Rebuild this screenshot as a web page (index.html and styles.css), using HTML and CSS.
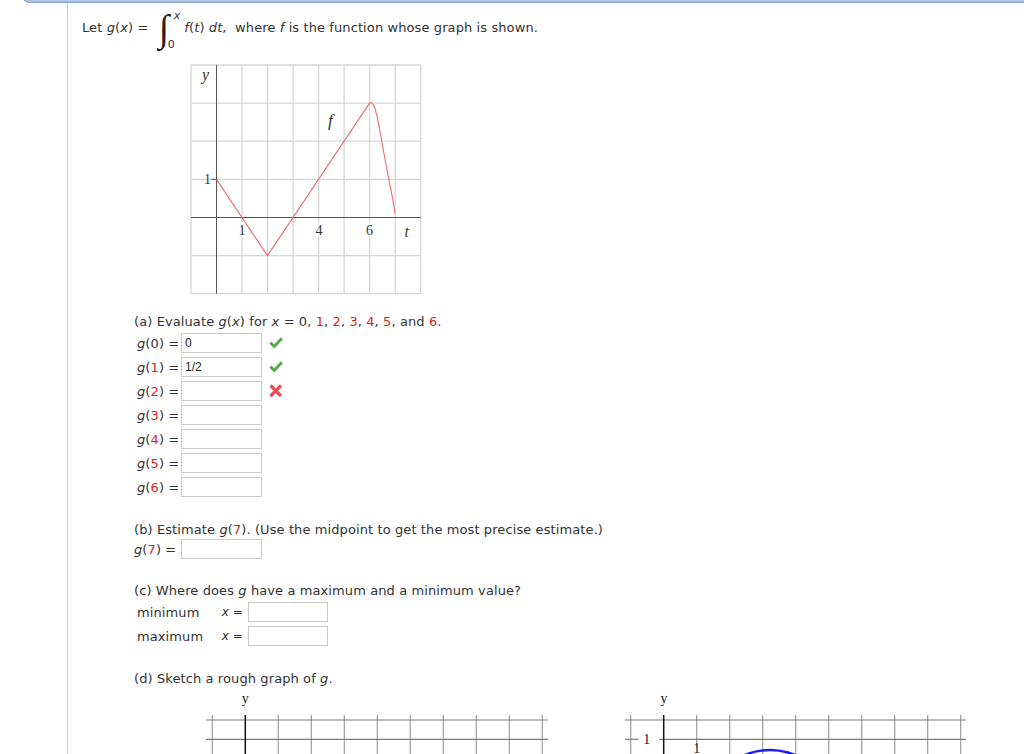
FILE: index.html
```html
<!DOCTYPE html>
<html>
<head>
<meta charset="utf-8">
<link rel="stylesheet" href="styles.css">
</head>
<body>
<div class="topbar"><div class="topbar-inner"></div></div>
<div class="page">
  <div class="content">
    <div class="intro">
      <span class="word">Let <i>g</i>(<i>x</i>) =</span>
      <span class="integral">
        <span class="int-sign">∫</span>
        <span class="limits"><i class="up">x</i><span class="low">0</span></span>
      </span>
      <span class="word"><i>f</i>(<i>t</i>) <i>dt</i>, &nbsp;where <i>f</i> is the function whose graph is shown.</span>
    </div>

    <svg class="graph-f" width="232" height="231" viewBox="0 0 232 231">
      <g class="grid">
        <line x1="1" y1="1" x2="1" y2="229.7"/>
        <line x1="52" y1="1" x2="52" y2="229.7"/>
        <line x1="77.6" y1="1" x2="77.6" y2="229.7"/>
        <line x1="103.1" y1="1" x2="103.1" y2="229.7"/>
        <line x1="128.6" y1="1" x2="128.6" y2="229.7"/>
        <line x1="154.1" y1="1" x2="154.1" y2="229.7"/>
        <line x1="179.6" y1="1" x2="179.6" y2="229.7"/>
        <line x1="205.2" y1="1" x2="205.2" y2="229.7"/>
        <line x1="230.7" y1="1" x2="230.7" y2="229.7"/>
        <line x1="1" y1="1" x2="230.7" y2="1"/>
        <line x1="1" y1="39.1" x2="230.7" y2="39.1"/>
        <line x1="1" y1="77.2" x2="230.7" y2="77.2"/>
        <line x1="1" y1="115.4" x2="230.7" y2="115.4"/>
        <line x1="1" y1="191.6" x2="230.7" y2="191.6"/>
        <line x1="1" y1="229.7" x2="230.7" y2="229.7"/>
      </g>
      <g class="axes">
        <line x1="26.5" y1="1" x2="26.5" y2="229.7"/>
        <line x1="1" y1="153.5" x2="230.7" y2="153.5"/>
        <line x1="21.5" y1="115.4" x2="26.5" y2="115.4"/>
      </g>
      <rect class="knock" x="47" y="159" width="10" height="13"/>
      <rect class="knock" x="124" y="159" width="10" height="13"/>
      <rect class="knock" x="174.5" y="159" width="10" height="13"/>
      <polyline class="fline" points="26.5,115.4 77.5,191.6 179.6,39.1 180.9,38.6 182.2,39.2 184.7,43.4 187.3,53.2 189.8,66.4 192.4,81.1 194.9,94.4 198.8,115.4 202.6,134.4 205.1,149.7"/>
      <text class="lab it" x="12" y="16">y</text>
      <text class="lab" x="14" y="119.8">1</text>
      <text class="lab mid" x="52" y="170.5">1</text>
      <text class="lab mid" x="129" y="170.5">4</text>
      <text class="lab mid" x="179.5" y="170.5">6</text>
      <text class="lab it" x="214.5" y="173">t</text>
      <text class="lab it big" x="138" y="62">f</text>
    </svg>

    <div class="part part-a">
      <p class="q">(a) Evaluate <i>g</i>(<i>x</i>) for <i>x</i> = 0, <span class="red">1</span>, <span class="red">2</span>, <span class="red">3</span>, <span class="red">4</span>, <span class="red">5</span>, and <span class="red">6</span>.</p>
      <div class="rows rows-a">
        <div class="row"><span class="lbl"><i>g</i>(0) =</span><span class="box">0</span>
          <svg class="mark" width="16" height="16" viewBox="0 0 16 16"><path class="ok" d="M1.2,8.6 L3.6,6.4 L6.2,9.2 L12.9,2.2 L15,4.3 L6.3,13.4 Z"/></svg></div>
        <div class="row"><span class="lbl"><i>g</i>(<span class="red">1</span>) =</span><span class="box">1/2</span>
          <svg class="mark" width="16" height="16" viewBox="0 0 16 16"><path class="ok" d="M1.2,8.6 L3.6,6.4 L6.2,9.2 L12.9,2.2 L15,4.3 L6.3,13.4 Z"/></svg></div>
        <div class="row"><span class="lbl"><i>g</i>(<span class="red">2</span>) =</span><span class="box"></span>
          <svg class="mark" width="16" height="16" viewBox="0 0 16 16"><path class="bad" d="M2.5,2.5 L13,13 M13,2.5 L2.5,13"/></svg></div>
        <div class="row"><span class="lbl"><i>g</i>(<span class="red">3</span>) =</span><span class="box"></span></div>
        <div class="row"><span class="lbl"><i>g</i>(<span class="red">4</span>) =</span><span class="box"></span></div>
        <div class="row"><span class="lbl"><i>g</i>(<span class="red">5</span>) =</span><span class="box"></span></div>
        <div class="row"><span class="lbl"><i>g</i>(<span class="red">6</span>) =</span><span class="box"></span></div>
      </div>
    </div>

    <div class="part part-b">
      <p class="q">(b) Estimate <i>g</i>(<span class="red">7</span>). (Use the midpoint to get the most precise estimate.)</p>
      <div class="rows rows-b">
        <div class="row"><span class="lbl lbl-b"><i>g</i>(<span class="red">7</span>) =</span><span class="box"></span></div>
      </div>
    </div>

    <div class="part part-c">
      <p class="q">(c) Where does <i>g</i> have a maximum and a minimum value?</p>
      <div class="rows rows-c">
        <div class="row"><span class="lbl lbl-c">minimum</span><span class="eq"><i>x</i> =</span><span class="box"></span></div>
        <div class="row"><span class="lbl lbl-c">maximum</span><span class="eq"><i>x</i> =</span><span class="box"></span></div>
      </div>
    </div>

    <div class="part part-d">
      <p class="q">(d) Sketch a rough graph of <i>g</i>.</p>
      <div class="sketches">
        <svg class="sketch" width="352" height="90" viewBox="0 0 352 90">
          <g class="vgrid">
            <line x1="12.3" y1="25" x2="12.3" y2="90"/>
            <line x1="78.3" y1="25" x2="78.3" y2="90"/>
            <line x1="111.3" y1="25" x2="111.3" y2="90"/>
            <line x1="144.3" y1="25" x2="144.3" y2="90"/>
            <line x1="177.3" y1="25" x2="177.3" y2="90"/>
            <line x1="210.3" y1="25" x2="210.3" y2="90"/>
            <line x1="243.3" y1="25" x2="243.3" y2="90"/>
            <line x1="276.3" y1="25" x2="276.3" y2="90"/>
            <line x1="309.3" y1="25" x2="309.3" y2="90"/>
            <line x1="342.3" y1="25" x2="342.3" y2="90"/>
          </g>
          <g class="hgrid">
            <line x1="6" y1="30" x2="348" y2="30"/>
            <line x1="6" y1="49.3" x2="348" y2="49.3"/>
            <line x1="6" y1="68.6" x2="348" y2="68.6"/>
          </g>
          <line class="yaxis" x1="45.3" y1="25" x2="45.3" y2="90"/>
          <text class="slab mid" x="45.3" y="12.5">y</text>
        </svg>
        <svg class="sketch" width="352" height="90" viewBox="0 0 352 90">
          <g class="vgrid">
            <line x1="10.7" y1="25" x2="10.7" y2="90"/>
            <line x1="76.7" y1="25" x2="76.7" y2="58"/>
            <line x1="109.7" y1="25" x2="109.7" y2="90"/>
            <line x1="142.7" y1="25" x2="142.7" y2="90"/>
            <line x1="175.7" y1="25" x2="175.7" y2="90"/>
            <line x1="208.7" y1="25" x2="208.7" y2="90"/>
            <line x1="241.7" y1="25" x2="241.7" y2="90"/>
            <line x1="274.7" y1="25" x2="274.7" y2="90"/>
            <line x1="307.7" y1="25" x2="307.7" y2="90"/>
            <line x1="340.7" y1="25" x2="340.7" y2="90"/>
          </g>
          <g class="hgrid">
            <line x1="5" y1="30" x2="346" y2="30"/>
            <line x1="5" y1="49.3" x2="18.3" y2="49.3"/>
            <line x1="39.3" y1="49.3" x2="346" y2="49.3"/>
          </g>
          <line class="yaxis" x1="43.7" y1="25" x2="43.7" y2="90"/>
          <path class="arc" d="M114,70 Q150,50 186,70"/>
          <text class="slab mid" x="44" y="12.5">y</text>
          <text class="slab mid" x="26.8" y="54">1</text>
          <text class="slab mid" x="76.7" y="62.6">1</text>
        </svg>
      </div>
    </div>
  </div>
</div>
</body>
</html>
```

FILE: styles.css
```css
html, body {
  margin: 0;
  padding: 0;
  background: #ffffff;
}
body {
  font-family: "DejaVu Sans", Verdana, sans-serif;
  font-size: 13px;
  letter-spacing: 0.1px;
  color: #333333;
}
.topbar {
  height: 3px;
  overflow: hidden;
  margin-left: 22px;
}
.topbar-inner {
  height: 12px;
  margin-top: -9px;
  box-sizing: border-box;
  background: #aec6e1;
  border-left: 1px solid #7f9ec4;
  border-bottom: 1px solid #7f9ec4;
  border-bottom-left-radius: 8px;
}
.page {
  margin-left: 67px;
  border-left: 1px solid #d2d2d2;
  min-height: 900px;
}
.content {
  padding-left: 14px;
}
.intro {
  display: flex;
  align-items: center;
  height: 49px;
  white-space: pre;
}
.integral {
  display: inline-flex;
  align-items: stretch;
  margin-left: 10px;
  margin-right: 4px;
  height: 44px;
}
.int-sign {
  font-family: "Liberation Serif", serif;
  font-style: italic;
  font-size: 38px;
  line-height: 44px;
  color: #222;
  letter-spacing: 0;
}
.limits {
  display: flex;
  flex-direction: column;
  justify-content: space-between;
  font-size: 11px;
  line-height: 11px;
  padding: 4px 0 0;
  letter-spacing: 0;
}
.up {
  margin-left: 5px;
}
.low {
  margin-left: -1px;
}
.graph-f {
  display: block;
  margin-left: 108px;
  margin-top: 12px;
}
.grid line {
  stroke: #d6d6d6;
  stroke-width: 1.3;
}
.axes line {
  stroke: #555555;
  stroke-width: 1;
}
.knock {
  fill: #ffffff;
}
.fline {
  fill: none;
  stroke: #ee6b6b;
  stroke-width: 1.1;
  stroke-linejoin: round;
}
.lab {
  font-family: "Liberation Serif", serif;
  font-size: 14px;
  fill: #333;
  letter-spacing: 0;
}
.lab.it {
  font-style: italic;
  font-size: 16px;
}
.lab.big {
  font-size: 17px;
}
.mid {
  text-anchor: middle;
}
.part {
  margin-left: 52px;
}
.q {
  margin: 0;
  line-height: 16px;
  white-space: nowrap;
}
.red {
  color: #dd2222;
}
.part-a {
  margin-top: 19px;
}
.rows-a {
  margin-top: 1px;
}
.part-b {
  margin-top: 23px;
}
.rows-b {
  margin-top: -1px;
}
.part-c {
  margin-top: 22px;
}
.rows-c {
  margin-top: 1px;
}
.part-d {
  margin-top: 23px;
}
.row {
  display: flex;
  align-items: center;
  height: 24px;
}
.lbl {
  flex: none;
  box-sizing: border-box;
  width: 47px;
  padding-left: 3px;
  white-space: nowrap;
}
.lbl-b {
  padding-left: 0;
}
.lbl-c {
  width: 87.7px;
}
.eq {
  flex: none;
  width: 26px;
  white-space: nowrap;
  font-size: 12px;
}
.box {
  flex: none;
  box-sizing: border-box;
  width: 81px;
  height: 20px;
  border: 1px solid #c9c9c9;
  padding-left: 3px;
  font-family: "Liberation Sans", Arial, sans-serif;
  font-size: 12px;
  letter-spacing: 0;
  line-height: 18px;
  color: #222;
}
.rows-c .box {
  width: 80px;
}
.mark {
  flex: none;
  margin-left: 6px;
}
.ok {
  fill: #58ab4c;
}
.bad {
  fill: none;
  stroke: #ee4b55;
  stroke-width: 3.2;
}
.sketches {
  display: flex;
  gap: 68px;
  margin-left: 66px;
  margin-top: 3px;
}
.sketch {
  display: block;
  flex: none;
}
.vgrid line {
  stroke: #9c9c9c;
  stroke-width: 1.2;
}
.hgrid line {
  stroke: #7c7c7c;
  stroke-width: 1.2;
}
.yaxis {
  stroke: #111111;
  stroke-width: 1.5;
}
.arc {
  fill: none;
  stroke: #1a1aff;
  stroke-width: 2.5;
}
.slab {
  font-family: "Liberation Serif", serif;
  font-size: 14px;
  fill: #222;
  letter-spacing: 0;
}
```
